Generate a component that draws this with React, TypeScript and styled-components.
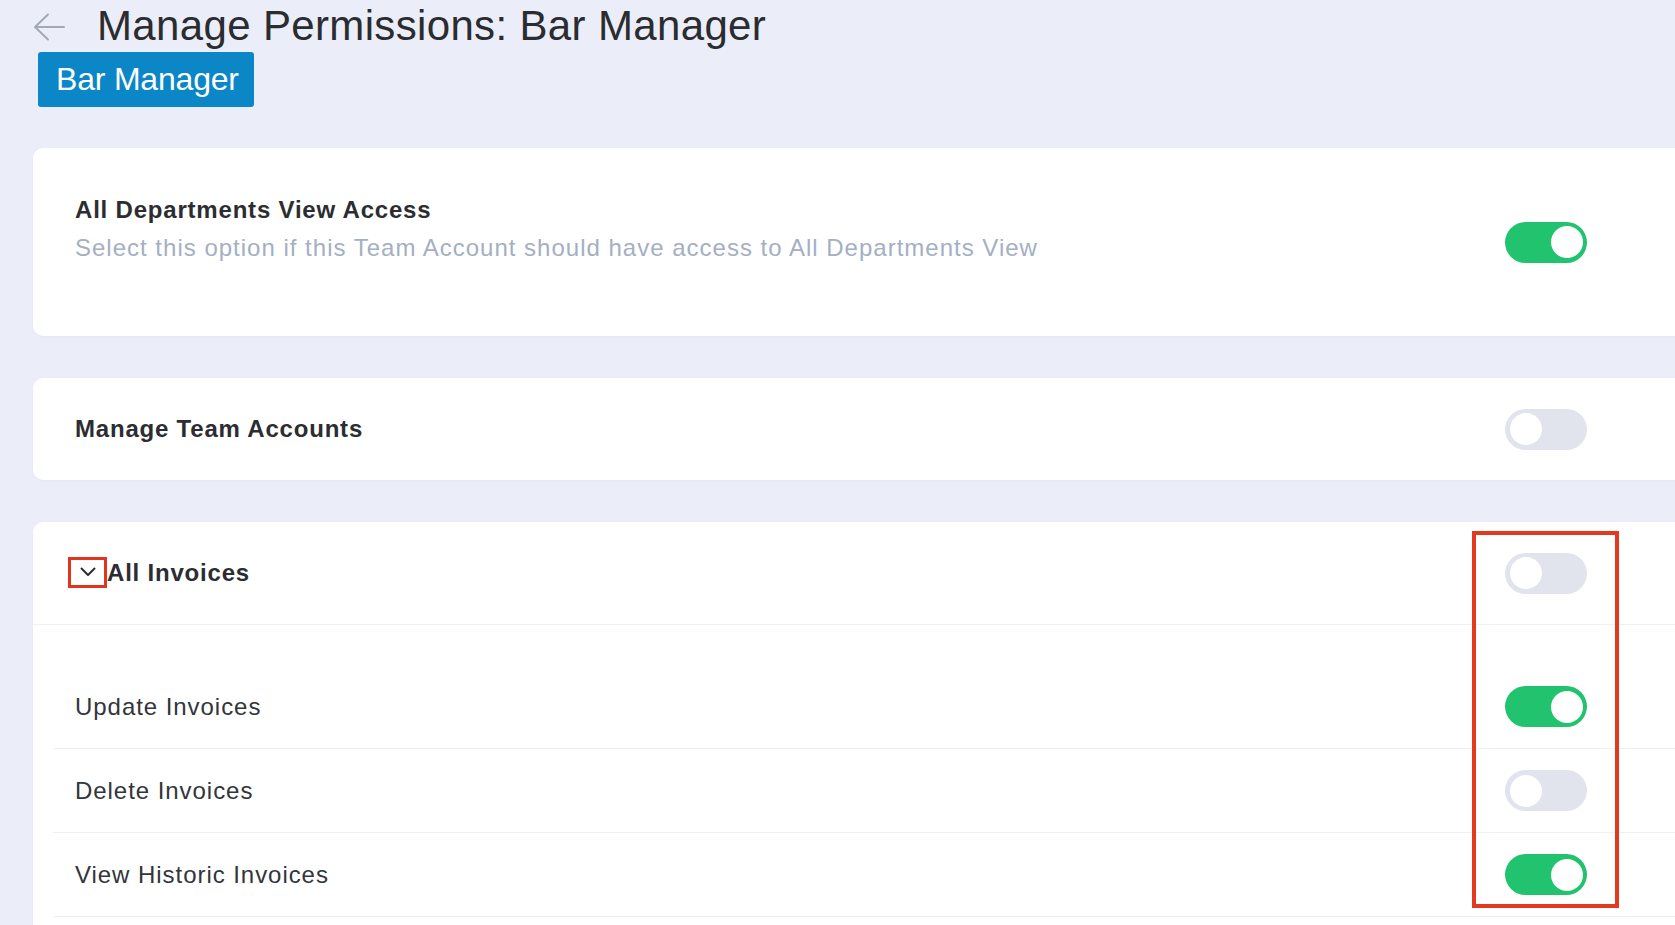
import React from 'react';
import styled, {createGlobalStyle} from 'styled-components';

const GlobalStyle = createGlobalStyle`
  html, body {
    margin: 0;
    padding: 0;
    background: #ebeef8;
    overflow: hidden;
  }
  * {
    box-sizing: border-box;
  }
  body {
    font-family: 'Liberation Sans', Arial, sans-serif;
    color: #2c2e33;
  }
`;

interface Permission {
  label: string;
  enabled: boolean;
}

const invoicePermissions: Permission[] = [
  {label: 'Update Invoices', enabled: true},
  {label: 'Delete Invoices', enabled: false},
  {label: 'View Historic Invoices', enabled: true},
];

const Toggle = ({on}: {on: boolean}) => (
  <Track $on={on}>
    <Knob $on={on} />
  </Track>
);

const ArrowIcon = () => (
  <svg width="32" height="28" viewBox="0 0 32 28" fill="none">
    <path d="M31 14H2M15 1.5L2 14l13 12.5" stroke="#a1a9b9" strokeWidth="2" strokeLinecap="round" strokeLinejoin="round" />
  </svg>
);

const ChevronIcon = () => (
  <svg width="16" height="10" viewBox="0 0 16 10" fill="none">
    <path d="M1.5 1.5L8 8l6.5-6.5" stroke="#2c2e33" strokeWidth="2" strokeLinecap="round" strokeLinejoin="round" />
  </svg>
);

export default function App() {
  return (
    <>
      <GlobalStyle />
      <Page>
        <TitleRow>
          <BackButton>
            <ArrowIcon />
          </BackButton>
          <Title>Manage Permissions: Bar Manager</Title>
        </TitleRow>
        <RoleBadge>Bar Manager</RoleBadge>

        <CardList>
          <Card $height={188}>
            <CardText>
              <CardTitle>All Departments View Access</CardTitle>
              <CardHint>Select this option if this Team Account should have access to All Departments View</CardHint>
            </CardText>
            <Toggle on />
          </Card>

          <Card $height={102}>
            <CardTitle>Manage Team Accounts</CardTitle>
            <Toggle on={false} />
          </Card>

          <GroupCard>
            <GroupHeader>
              <GroupName>
                <ExpandButton>
                  <ChevronIcon />
                </ExpandButton>
                <CardTitle>All Invoices</CardTitle>
              </GroupName>
              <Toggle on={false} />
            </GroupHeader>
            <SubList>
              {invoicePermissions.map((p) => (
                <SubRow key={p.label}>
                  <SubLabel>{p.label}</SubLabel>
                  <Toggle on={p.enabled} />
                </SubRow>
              ))}
            </SubList>
            <Highlight />
          </GroupCard>
        </CardList>
      </Page>
    </>
  );
}

const Page = styled.div`
  padding-left: 33px;
  width: 1733px;
`;

const TitleRow = styled.div`
  display: flex;
  align-items: center;
  gap: 32px;
  height: 52px;
`;

const BackButton = styled.div`
  display: flex;
  align-items: center;
  width: 32px;
  height: 28px;
  margin-top: 2px;
`;

const Title = styled.h1`
  margin: 0;
  font-size: 42px;
  line-height: 52px;
  font-weight: 400;
  color: #2a2c30;
  letter-spacing: 0.35px;
`;

const RoleBadge = styled.div`
  display: inline-flex;
  align-items: center;
  margin-left: 5px;
  height: 55px;
  padding: 0 15px 0 18px;
  background: #0b86c7;
  color: #fff;
  border-radius: 3px;
  font-size: 32px;
  letter-spacing: -0.2px;
`;

const CardList = styled.div`
  display: flex;
  flex-direction: column;
  gap: 42px;
  margin-top: 41px;
`;

const Card = styled.div<{$height: number}>`
  display: flex;
  align-items: center;
  justify-content: space-between;
  height: ${(p) => p.$height}px;
  padding: 0 146px 0 42px;
  background: #fff;
  border-radius: 10px;
  box-shadow: 0 1px 3px rgba(40, 50, 80, 0.04);
`;

const CardText = styled.div`
  align-self: flex-start;
  display: flex;
  flex-direction: column;
  gap: 4px;
  padding-top: 45px;
`;

const CardTitle = styled.div`
  font-size: 24px;
  line-height: 34px;
  font-weight: 700;
  letter-spacing: 0.8px;
  color: #2b2d31;
`;

const CardHint = styled.div`
  font-size: 24px;
  line-height: 34px;
  letter-spacing: 1px;
  color: #a4afc3;
`;

const GroupCard = styled.div`
  position: relative;
  background: #fff;
  border-radius: 10px 10px 0 0;
  box-shadow: 0 1px 3px rgba(40, 50, 80, 0.04);
  padding-bottom: 40px;
`;

const GroupHeader = styled.div`
  display: flex;
  align-items: center;
  justify-content: space-between;
  height: 103px;
  padding: 0 146px 0 35px;
  border-bottom: 1px solid #eef0f4;
`;

const GroupName = styled.div`
  display: flex;
  align-items: center;
`;

const ExpandButton = styled.div`
  display: flex;
  align-items: center;
  justify-content: center;
  width: 39px;
  height: 31px;
  border: 3px solid #e2341f;
  margin-top: -2px;
`;

const SubList = styled.div`
  margin-left: 20px;
  padding-top: 40px;
`;

const SubRow = styled.div`
  display: flex;
  align-items: center;
  justify-content: space-between;
  height: 84px;
  padding: 0 146px 0 22px;
  border-bottom: 1px solid #eef0f4;
`;

const SubLabel = styled.div`
  font-size: 24px;
  line-height: 34px;
  letter-spacing: 0.95px;
  color: #32353a;
`;

const Track = styled.div<{$on: boolean}>`
  position: relative;
  flex-shrink: 0;
  width: 82px;
  height: 41px;
  border-radius: 21px;
  background: ${(p) => (p.$on ? '#22c36e' : '#e1e4ec')};
`;

const Knob = styled.div<{$on: boolean}>`
  position: absolute;
  top: 4.5px;
  left: ${(p) => (p.$on ? '45.5px' : '4.5px')};
  width: 32px;
  height: 32px;
  border-radius: 50%;
  background: #fff;
`;

const Highlight = styled.div`
  position: absolute;
  left: 1439px;
  top: 9px;
  width: 147px;
  height: 377px;
  border: 4px solid #e3391f;
  pointer-events: none;
`;
